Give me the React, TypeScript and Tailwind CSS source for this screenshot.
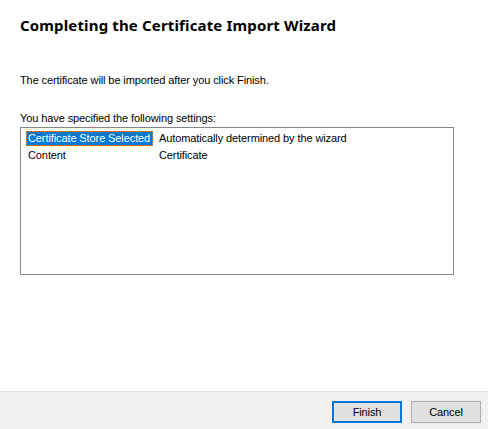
import React from 'react';

const settings = [
  { name: 'Certificate Store Selected', value: 'Automatically determined by the wizard' },
  { name: 'Content', value: 'Certificate' },
];

export default function App() {
  return (
    <div className="w-[488px] h-[429px] flex flex-col bg-white text-[11px] tracking-[-0.1px] text-black font-['Liberation_Sans',Arial,sans-serif]">
      {/* Body */}
      <div className="flex-1 px-5">
        <h1 className="pt-[15px] text-[15px] leading-5 font-bold tracking-[0.15px] font-['Noto_Sans',sans-serif]">
          Completing the Certificate Import Wizard
        </h1>
        <p className="mt-[37px] leading-4">The certificate will be imported after you click Finish.</p>
        <p className="mt-[22px] leading-4">You have specified the following settings:</p>
        <div className="mt-px w-[434px] h-[148px] border border-[#828790] pt-[2px] pl-[5px]">
          {settings.map((s, i) => (
            <div key={s.name} className="flex h-[17px] items-start leading-4">
              <span
                className={
                  i === 0
                    ? 'w-[127px] h-[15px] mt-px pl-px bg-[#0078d7] text-white border border-dotted border-[#ff8728] leading-[13px] whitespace-nowrap overflow-hidden'
                    : 'w-[127px] pl-[2px] whitespace-nowrap'
                }
              >
                {s.name}
              </span>
              <span className="ml-[6px] whitespace-nowrap">{s.value}</span>
            </div>
          ))}
        </div>
      </div>

      {/* Footer */}
      <div className="h-[38px] border-t border-[#dfdfdf] bg-[#f0f0f0] flex justify-end items-start pt-[9px] pr-[7px] gap-[9px]">
        <button className="w-[70px] h-[22px] border-2 border-[#0078d7] bg-[#e1e1e1] leading-4">Finish</button>
        <button className="w-[70px] h-[22px] border border-[#adadad] bg-[#e1e1e1] leading-4">Cancel</button>
      </div>
    </div>
  );
}
